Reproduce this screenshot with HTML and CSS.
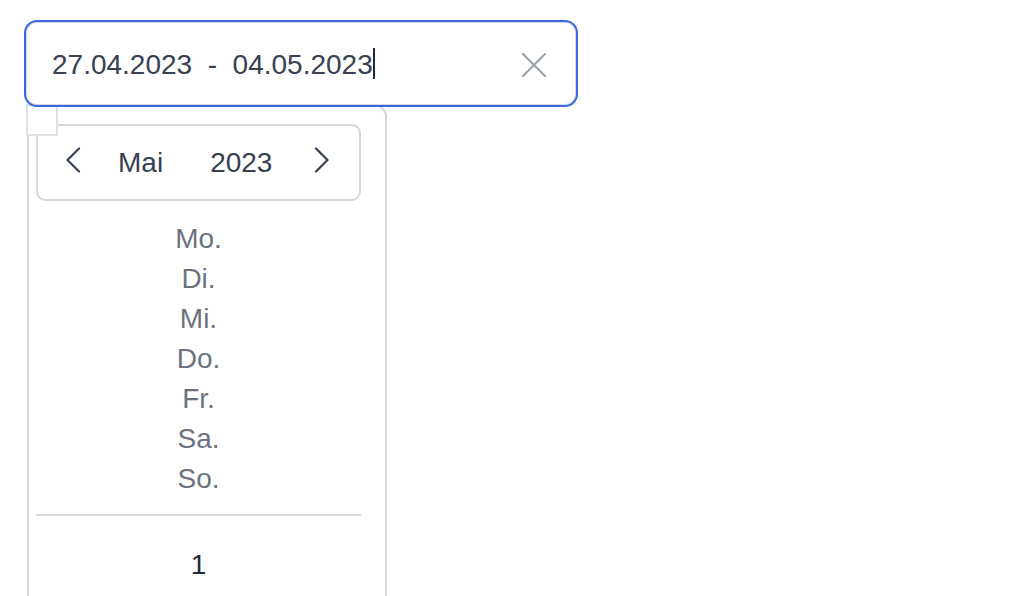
FILE: index.html
```html
<!DOCTYPE html>
<html lang="de">
<head>
<meta charset="utf-8">
<title>Datumsbereich</title>
<link rel="stylesheet" href="styles.css">
</head>
<body>
<div class="page">
  <div class="field">
    <div class="value">27.04.2023  -  04.05.2023<span class="caret"></span></div>
    <svg class="clear" width="24" height="24" viewBox="0 0 24 24" aria-hidden="true">
      <path d="M1 1 L23 23 M23 1 L1 23" fill="none" stroke="#9ca3af" stroke-width="2.2" stroke-linecap="round"/>
    </svg>
  </div>
  <div class="popup">
    <div class="arrow"></div>
    <div class="nav">
      <svg class="chev chev-left" width="16" height="26" viewBox="0 0 16 26" aria-hidden="true">
        <path d="M14 1.5 L2.5 13 L14 24.5" fill="none" stroke="#374151" stroke-width="2.2" stroke-linecap="round" stroke-linejoin="round"/>
      </svg>
      <span class="month">Mai</span>
      <span class="year">2023</span>
      <svg class="chev chev-right" width="16" height="26" viewBox="0 0 16 26" aria-hidden="true">
        <path d="M2 1.5 L13.5 13 L2 24.5" fill="none" stroke="#374151" stroke-width="2.2" stroke-linecap="round" stroke-linejoin="round"/>
      </svg>
    </div>
    <div class="weekdays">
      <div>Mo.</div>
      <div>Di.</div>
      <div>Mi.</div>
      <div>Do.</div>
      <div>Fr.</div>
      <div>Sa.</div>
      <div>So.</div>
    </div>
    <div class="divider"></div>
    <div class="days">
      <div>1</div>
    </div>
  </div>
</div>
</body>
</html>
```
FILE: styles.css
```css
html, body {
  margin: 0;
  padding: 0;
  background: #ffffff;
  overflow: hidden;
}
body {
  font-family: "Liberation Sans", Arial, sans-serif;
  color: #374151;
  height: 596px;
}
.page {
  padding: 20px 0 0 24px;
}
.field {
  position: relative;
  z-index: 2;
  box-sizing: border-box;
  width: 554px;
  height: 87px;
  border: 2px solid #3b66e4;
  border-radius: 13px;
  box-shadow: inset 0 0 0 1px #d6d9de;
  background: #fff;
  display: flex;
  align-items: center;
  padding: 0 30px 0 26px;
}
.value {
  flex: 1;
  white-space: pre;
  font-size: 28px;
  color: #374151;
  display: flex;
  align-items: center;
  padding-top: 2px;
}
.caret {
  display: inline-block;
  width: 2px;
  height: 31px;
  background: #1f2937;
  margin-top: -2px;
}
.clear {
  display: block;
  margin-top: 2px;
}
.popup {
  position: relative;
  z-index: 1;
  box-sizing: border-box;
  width: 360px;
  height: 520px;
  margin: -3px 0 0 3px;
  border: 2px solid #d4d7dc;
  border-radius: 0 13px 0 0;
  padding: 18px 24px 0 7px;
  background: #fff;
}
.arrow {
  position: absolute;
  left: -3px;
  top: -2px;
  width: 28px;
  height: 28px;
  background: #fff;
  border: 2px solid #dcdfe3;
  z-index: 3;
}
.nav {
  box-sizing: border-box;
  height: 77px;
  border: 2px solid #d4d7dc;
  border-radius: 9px;
  display: flex;
  align-items: center;
  padding-left: 27px;
  font-size: 28px;
  color: #374151;
}
.chev {
  display: block;
  flex: none;
  margin-top: -5px;
}
.month {
  margin-left: 37px;
}
.year {
  margin-left: 47px;
}
.chev-right {
  margin-left: 42px;
}
.weekdays {
  margin-top: 18px;
  text-align: center;
  font-size: 28px;
  line-height: 40px;
  color: #6b7280;
}
.divider {
  margin-top: 15px;
  height: 2px;
  background: #d4d7dc;
}
.days {
  margin-top: 29px;
  text-align: center;
  font-size: 28px;
  line-height: 40px;
  color: #1f2937;
}
```
